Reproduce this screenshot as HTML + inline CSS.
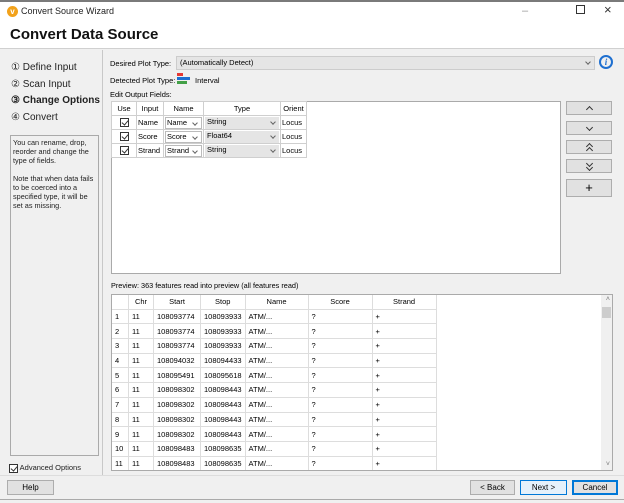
<!DOCTYPE html>
<html><head><meta charset="utf-8"><style>
*{box-sizing:border-box;margin:0;padding:0}
body{width:624px;height:503px;position:relative;overflow:hidden;background:#f0f0f0;font-family:"Liberation Sans",sans-serif;font-size:7.5px;color:#000}
.a{position:absolute}
.btn{position:absolute;background:#e1e1e1;border:1px solid #adadad;text-align:center;font-size:8px;line-height:13px}
table{border-collapse:collapse}
td{border:1px solid #ddd;padding:0 3px;height:14.7px;white-space:nowrap;font-size:7.5px}
.ft td{height:14px;border-color:#cfcfcf;font-size:7.5px;padding:0 1px}
.cb{display:inline-block;width:9px;height:9px;border:1px solid #333;position:relative;vertical-align:middle;background:#fff}
.cb:after{content:"";position:absolute;left:2px;top:0px;width:3px;height:5px;border:solid #333;border-width:0 1px 1px 0;transform:rotate(40deg)}
.dd{background:#fff;border:1px solid #bbb;position:relative;padding-left:1px}
.dd2{background:#e5e5e5;position:relative;padding-left:2px}
.car:after{content:"";position:absolute;right:4px;top:3px;width:3px;height:3px;border:solid #666;border-width:0 1px 1px 0;transform:rotate(45deg)}
.ch{position:absolute;left:20px;width:5px;height:5px;border:solid #333;border-width:1.3px 0 0 1.3px}
</style></head><body>
<div class="a" style="left:0;top:0;width:624px;height:48px;background:#fff"></div>
<div class="a" style="left:0;top:0;width:624px;height:2px;background:#7a7a7a"></div>
<div class="a" style="left:0;top:48px;width:624px;height:1px;background:#d0d0d0"></div>
<div class="a" style="left:7px;top:6px;width:11px;height:11px;border-radius:50%;background:#f2a21b;color:#fff;font-size:8px;line-height:11px;text-align:center;font-weight:bold">v</div>
<div class="a" style="left:21px;top:6px;font-size:9px;color:#222">Convert Source Wizard</div>
<div class="a" style="left:522px;top:5px;font-size:11px;color:#999">–</div>
<div class="a" style="left:576px;top:5px;width:9px;height:9px;border:1px solid #333"></div>
<div class="a" style="left:604px;top:2px;font-size:13px;color:#333">×</div>
<div class="a" style="left:10px;top:26px;font-size:15px;font-weight:bold;color:#111">Convert Data Source</div>

<div class="a" style="left:11px;top:60px;font-size:10px;color:#222;line-height:16.6px">① Define Input<br>② Scan Input<br><b>③ Change Options</b><br>④ Convert</div>
<div class="a" style="left:102px;top:50px;width:1px;height:426px;background:#c8c8c8"></div>
<div class="a" style="left:10px;top:135px;width:89px;height:321px;border:1px solid #aaa;background:#f0f0f0;padding:2px;font-size:7.3px;line-height:9px;color:#222">You can rename, drop, reorder and change the type of fields.<br><br>Note that when data fails to be coerced into a specified type, it will be set as missing.</div>
<div class="a" style="left:9px;top:463px;font-size:7.5px;color:#222"><span class="cb"></span> Advanced Options</div>

<div class="a" style="left:110px;top:59px">Desired Plot Type:</div>
<div class="a dd2 car" style="left:176px;top:56px;width:419px;height:14px;border:1px solid #ccc;padding-left:3px;line-height:12px">(Automatically Detect)</div>
<div class="a" style="left:599px;top:55px;width:14px;height:14px;border:2px solid #1e6fd0;border-radius:50%;color:#1e6fd0;font:bold italic 9px 'Liberation Serif',serif;text-align:center;line-height:10px">i</div>
<div class="a" style="left:110px;top:76px">Detected Plot Type:</div>
<div class="a" style="left:177px;top:73px;width:6px;height:3px;background:#e53935"></div>
<div class="a" style="left:177px;top:77px;width:13px;height:3px;background:#1e6fd0"></div>
<div class="a" style="left:177px;top:81px;width:10px;height:3px;background:#43a047"></div>
<div class="a" style="left:195px;top:76px">Interval</div>
<div class="a" style="left:110px;top:90px">Edit Output Fields:</div>

<div class="a" style="left:111px;top:101px;width:450px;height:173px;background:#fff;border:1px solid #aaa">
<table class="ft" style="margin:-1px 0 0 -1px;table-layout:fixed">
<tr style="text-align:center"><td style="width:25px">Use</td><td style="width:27px">Input</td><td style="width:40px">Name</td><td style="width:77px">Type</td><td style="width:26px">Orient</td></tr>
<tr><td style="text-align:center"><span class="cb"></span></td><td>Name</td><td><div class="dd car" style="height:12px">Name</div></td><td><div class="dd2 car" style="height:12px">String</div></td><td>Locus</td></tr>
<tr><td style="text-align:center"><span class="cb"></span></td><td>Score</td><td><div class="dd car" style="height:12px">Score</div></td><td><div class="dd2 car" style="height:12px">Float64</div></td><td>Locus</td></tr>
<tr><td style="text-align:center"><span class="cb"></span></td><td>Strand</td><td><div class="dd car" style="height:12px">Strand</div></td><td><div class="dd2 car" style="height:12px">String</div></td><td>Locus</td></tr>
</table></div>
<div class="btn" style="left:566px;top:101px;width:46px;height:14px"><div class="ch" style="top:5px;transform:rotate(45deg)"></div></div>
<div class="btn" style="left:566px;top:121px;width:46px;height:14px"><div class="ch" style="top:3px;transform:rotate(225deg)"></div></div>
<div class="btn" style="left:566px;top:140px;width:46px;height:14px"><div class="ch" style="top:3px;transform:rotate(45deg)"></div><div class="ch" style="top:7px;transform:rotate(45deg)"></div></div>
<div class="btn" style="left:566px;top:159px;width:46px;height:14px"><div class="ch" style="top:1px;transform:rotate(225deg)"></div><div class="ch" style="top:5px;transform:rotate(225deg)"></div></div>
<div class="btn" style="left:566px;top:179px;width:46px;height:18px;font-size:13px;line-height:16px">+</div>

<div class="a" style="left:111px;top:281px;font-size:7.3px">Preview: 363 features read into preview (all features read)</div>
<div class="a" style="left:111px;top:294px;width:502px;height:177px;background:#fff;border:1px solid #aaa;overflow:hidden">
<table style="margin:-1px 0 0 -1px;table-layout:fixed">
<tr style="text-align:center"><td style="width:17px;border-left:0"></td><td style="width:25px">Chr</td><td style="width:47px">Start</td><td style="width:43px">Stop</td><td style="width:63px">Name</td><td style="width:64px">Score</td><td style="width:64px">Strand</td></tr>
<tr><td>1</td><td>11</td><td>108093774</td><td>108093933</td><td>ATM/...</td><td>?</td><td>+</td></tr>
<tr><td>2</td><td>11</td><td>108093774</td><td>108093933</td><td>ATM/...</td><td>?</td><td>+</td></tr>
<tr><td>3</td><td>11</td><td>108093774</td><td>108093933</td><td>ATM/...</td><td>?</td><td>+</td></tr>
<tr><td>4</td><td>11</td><td>108094032</td><td>108094433</td><td>ATM/...</td><td>?</td><td>+</td></tr>
<tr><td>5</td><td>11</td><td>108095491</td><td>108095618</td><td>ATM/...</td><td>?</td><td>+</td></tr>
<tr><td>6</td><td>11</td><td>108098302</td><td>108098443</td><td>ATM/...</td><td>?</td><td>+</td></tr>
<tr><td>7</td><td>11</td><td>108098302</td><td>108098443</td><td>ATM/...</td><td>?</td><td>+</td></tr>
<tr><td>8</td><td>11</td><td>108098302</td><td>108098443</td><td>ATM/...</td><td>?</td><td>+</td></tr>
<tr><td>9</td><td>11</td><td>108098302</td><td>108098443</td><td>ATM/...</td><td>?</td><td>+</td></tr>
<tr><td>10</td><td>11</td><td>108098483</td><td>108098635</td><td>ATM/...</td><td>?</td><td>+</td></tr>
<tr><td>11</td><td>11</td><td>108098483</td><td>108098635</td><td>ATM/...</td><td>?</td><td>+</td></tr>
</table>
<div class="a" style="right:0;top:0;width:11px;height:177px;background:#f0f0f0"></div>
<div class="a" style="right:1px;top:12px;width:9px;height:11px;background:#cdcdcd"></div>
<div class="a" style="right:2px;top:1px;font-size:7px;color:#777">˄</div>
<div class="a" style="right:2px;bottom:2px;font-size:7px;color:#777">˅</div>
</div>

<div class="a" style="left:0;top:475px;width:624px;height:1px;background:#ddd"></div>
<div class="btn" style="left:7px;top:480px;width:47px;height:15px">Help</div>
<div class="btn" style="left:470px;top:480px;width:45px;height:15px">&lt; Back</div>
<div class="btn" style="left:520px;top:480px;width:47px;height:15px;background:#e5f1fb;border-color:#0078d7">Next &gt;</div>
<div class="btn" style="left:572px;top:480px;width:46px;height:15px;border:2px solid #0078d7;line-height:11px">Cancel</div>
<div class="a" style="left:0;top:499px;width:624px;height:1px;background:#aaa"></div>
</body></html>
